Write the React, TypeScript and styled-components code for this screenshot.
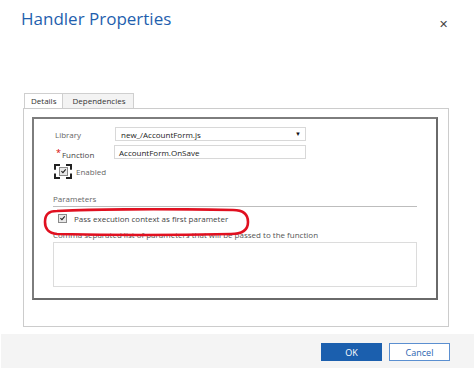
import React from "react";
import styled, { createGlobalStyle } from "styled-components";

const Global = createGlobalStyle`
  html, body { margin: 0; padding: 0; background: #ffffff; overflow: hidden; }
  * { box-sizing: border-box; }
`;

const Dialog = styled.div`
  width: 474px;
  height: 368px;
  display: flex;
  flex-direction: column;
  font-family: "Open Sans", "Noto Sans", sans-serif;
  background: #fff;
  position: relative;
`;

const Header = styled.div`
  display: flex;
  justify-content: space-between;
  align-items: flex-start;
  padding: 7px 26px 0 21px;
  height: 93px;
`;

const Title = styled.h1`
  margin: 0;
  font-size: 17px;
  font-weight: 400;
  color: #1f5fae;
`;

const Close = styled.span`
  font-size: 11px;
  color: #444;
  margin-top: 11px;
  line-height: 1;
`;

const Body = styled.div`
  padding: 0 25px 0 23px;
`;

const TabRow = styled.div`
  display: flex;
  padding-left: 1px;
`;

const Tab = styled.div<{ $active?: boolean }>`
  height: 15px;
  border: 1px solid #cfcfcf;
  border-bottom: none;
  border-left-width: ${(p) => (p.$active ? "1px" : "0")};
  background: ${(p) => (p.$active ? "#fff" : "#f3f3f3")};
  font-size: 8px;
  color: #333;
  line-height: 14px;
  padding: 0 ${(p) => (p.$active ? "6px" : "7px")} 0 ${(p) => (p.$active ? "6px" : "9px")};
`;

const Panel = styled.div`
  border: 1px solid #cccccc;
  height: 219px;
  padding: 8px 10px 26px 8px;
`;

const Frame = styled.div`
  border: 2px solid #7d7d7d;
  border-right-color: #6a6a6a;
  border-bottom-color: #6a6a6a;
  height: 100%;
  padding: 6px 19px 0 19px;
  position: relative;
`;

const FieldRow = styled.div<{ $h: number }>`
  display: flex;
  align-items: center;
  height: ${(p) => p.$h}px;
`;

const Label = styled.div`
  width: 62px;
  padding-left: 2px;
  font-size: 8px;
  color: #666;
`;

const FnLabel = styled(Label)`
  padding-left: 3px;
  padding-top: 2px;
  color: #444;
`;

const Star = styled.span`
  color: #d40000;
  font-size: 9px;
  vertical-align: 2px;
  margin-right: 1px;
`;

const SelectBox = styled.div`
  width: 191px;
  height: 14px;
  border: 1px solid #d8d8d8;
  font-size: 8px;
  color: #222;
  display: flex;
  align-items: center;
  justify-content: space-between;
  padding: 0 4px 0 5px;
`;

const Arrow = styled.span`
  font-size: 6px;
  color: #111;
`;

const InputBox = styled(SelectBox)`
  width: 192px;
  margin-left: -1px;
  padding-left: 4px;
`;

const CheckWrap = styled.div`
  display: flex;
  align-items: center;
  gap: 4px;
  padding-left: 1px;
`;

const Focus = styled.div`
  width: 18px;
  height: 15px;
  border: 2px dashed #222;
  display: flex;
  align-items: center;
  justify-content: center;
`;

const Box = styled.div<{ $size: number }>`
  width: ${(p) => p.$size}px;
  height: ${(p) => p.$size}px;
  border: 1px solid #8a8a8a;
  background: #e8e8e8;
  display: flex;
  align-items: center;
  justify-content: center;
  flex-shrink: 0;
`;

const CheckText = styled.span<{ $color?: string }>`
  font-size: 8px;
  color: ${(p) => p.$color || "#666"};
`;

const Section = styled.div`
  margin-top: 12px;
  font-size: 8px;
  color: #666;
  height: 14px;
  border-bottom: 1px solid #bdbdbd;
`;

const ParamRow = styled.div`
  display: flex;
  align-items: center;
  gap: 7px;
  height: 22px;
  padding: 0 0 0 5px;
`;

const Hint = styled.div`
  font-size: 8px;
  color: #555;
  height: 12px;
  line-height: 12px;
  margin-top: 0px;
`;

const TextArea = styled.div`
  margin-top: 1px;
  height: 45px;
  border: 1px solid #dcdcdc;
`;

const Annot = styled.svg`
  position: absolute;
  left: 9px;
  top: 89px;
  pointer-events: none;
`;

const Footer = styled.div`
  margin-top: 7px;
  flex: 1;
  background: #f4f4f4;
  display: flex;
  justify-content: flex-end;
  align-items: flex-start;
  gap: 7px;
  padding: 9px 24px 0 0;
  margin-left: 1px;
`;

const Button = styled.button<{ $primary?: boolean }>`
  width: 61px;
  height: 18px;
  font-family: inherit;
  font-size: 9px;
  border: 1px solid ${(p) => (p.$primary ? "#1b5fae" : "#5b8fd0")};
  background: ${(p) => (p.$primary ? "#1b5fae" : "#fff")};
  color: ${(p) => (p.$primary ? "#fff" : "#2a64b0")};
  padding: 0;
`;

const Tick = ({ s }: { s: number }) => (
  <svg width={s} height={s} viewBox="0 0 10 10">
    <path d="M2 5.2 L4.2 7.4 L8.2 2.6" fill="none" stroke="#222" strokeWidth="1.5" />
  </svg>
);

export default function App() {
  return (
    <>
      <Global />
      <Dialog>
        <Header>
          <Title>Handler Properties</Title>
          <Close>✕</Close>
        </Header>
        <Body>
          <TabRow>
            <Tab $active>Details</Tab>
            <Tab>Dependencies</Tab>
          </TabRow>
          <Panel>
            <Frame>
              <FieldRow $h={18}>
                <Label>Library</Label>
                <SelectBox>
                  <span>new_/AccountForm.js</span>
                  <Arrow>▼</Arrow>
                </SelectBox>
              </FieldRow>
              <FieldRow $h={18}>
                <FnLabel>
                  <Star>*</Star>Function
                </FnLabel>
                <InputBox>AccountForm.OnSave</InputBox>
              </FieldRow>
              <FieldRow $h={20}>
                <CheckWrap>
                  <Focus>
                    <Box $size={9}>
                      <Tick s={8} />
                    </Box>
                  </Focus>
                  <CheckText>Enabled</CheckText>
                </CheckWrap>
              </FieldRow>
              <Section>Parameters</Section>
              <ParamRow>
                <Box $size={9}>
                  <Tick s={8} />
                </Box>
                <CheckText $color="#444">Pass execution context as first parameter</CheckText>
              </ParamRow>
              <Hint>Comma separated list of parameters that will be passed to the function</Hint>
              <TextArea />
              <Annot width="210" height="30" viewBox="0 0 210 30">
                <path
                  d="M14 3 C60 1 140 1 190 2 C200 2 205 6 205 14 C205 22 200 26 188 26 C140 27 60 27 14 26 C5 25 2 21 2 14 C2 7 5 3 14 3 Z"
                  fill="none"
                  stroke="#e01020"
                  strokeWidth="2.6"
                />
              </Annot>
            </Frame>
          </Panel>
        </Body>
        <Footer>
          <Button $primary>OK</Button>
          <Button>Cancel</Button>
        </Footer>
      </Dialog>
    </>
  );
}
